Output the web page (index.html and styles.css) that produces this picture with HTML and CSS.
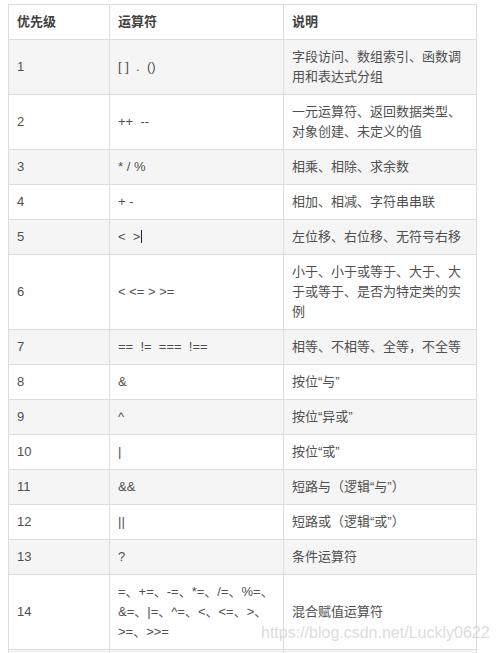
FILE: index.html
```html
<!DOCTYPE html>
<html lang="zh-CN">
<head>
<meta charset="utf-8">
<title>运算符优先级</title>
<link rel="stylesheet" href="styles.css">
</head>
<body>
<div class="page">
  <table class="ops">
    <colgroup>
      <col class="c1">
      <col class="c2">
      <col class="c3">
    </colgroup>
    <thead>
      <tr><th>优先级</th><th>运算符</th><th>说明</th></tr>
    </thead>
    <tbody>
      <tr><td>1</td><td>[ ]&nbsp;&nbsp;.&nbsp;&nbsp;()</td><td>字段访问、数组索引、函数调用和表达式分组</td></tr>
      <tr><td>2</td><td>++&nbsp; --</td><td>一元运算符、返回数据类型、对象创建、未定义的值</td></tr>
      <tr><td>3</td><td>* / %</td><td>相乘、相除、求余数</td></tr>
      <tr><td>4</td><td>+ -</td><td>相加、相减、字符串串联</td></tr>
      <tr><td>5</td><td>&lt;&nbsp; &gt;<span class="caret"></span></td><td>左位移、右位移、无符号右移</td></tr>
      <tr><td>6</td><td>&lt; &lt;= &gt; &gt;=</td><td>小于、小于或等于、大于、大于或等于、是否为特定类的实例</td></tr>
      <tr><td>7</td><td>==&nbsp; !=&nbsp; ===&nbsp; !==</td><td>相等、不相等、全等，不全等</td></tr>
      <tr><td>8</td><td>&amp;</td><td>按位“与”</td></tr>
      <tr><td>9</td><td>^</td><td>按位“异或”</td></tr>
      <tr><td>10</td><td>|</td><td>按位“或”</td></tr>
      <tr><td>11</td><td>&amp;&amp;</td><td>短路与（逻辑“与”）</td></tr>
      <tr><td>12</td><td>||</td><td>短路或（逻辑“或”）</td></tr>
      <tr><td>13</td><td>?</td><td>条件运算符</td></tr>
      <tr><td>14</td><td>=、+=、-=、*=、/=、%=、<br>&amp;=、|=、^=、&lt;、&lt;=、&gt;、<br>&gt;=、&gt;&gt;=</td><td>混合赋值运算符</td></tr>
      <tr class="tail"><td></td><td></td><td></td></tr>
    </tbody>
  </table>
  <div class="watermark">https://blog.csdn.net/Luckly0622</div>
</div>
</body>
</html>
```

FILE: styles.css
```css
html, body {
  margin: 0;
  padding: 0;
  background: #ffffff;
  overflow: hidden;
}

.page {
  position: relative;
  padding: 4px 0 0 8px;
  height: 649px;
  overflow: hidden;
}

.ops {
  border-collapse: collapse;
  table-layout: fixed;
  width: 468px;
  font-family: "Liberation Sans", "Noto Sans CJK SC", sans-serif;
  font-size: 13px;
  line-height: 20px;
  color: #4f4f4f;
}

.c1 { width: 101px; }
.c2 { width: 174px; }
.c3 { width: 193px; }

.ops th,
.ops td {
  border: 1px solid #dddddd;
  padding: 7px 8px;
  text-align: left;
  vertical-align: middle;
  word-break: normal;
}

.ops th {
  font-weight: bold;
  color: #3f3f3f;
  background: #ffffff;
}

.ops tbody tr:nth-child(odd) {
  background: #f5f5f5;
}

.ops tbody tr:nth-child(even) {
  background: #ffffff;
}

.caret {
  display: inline-block;
  width: 1px;
  height: 13px;
  margin-left: 1px;
  background: #222222;
  vertical-align: -2px;
}

.tail td {
  height: 40px;
}

.watermark {
  position: absolute;
  left: 261px;
  top: 625px;
  font-family: "Liberation Sans", sans-serif;
  font-size: 16px;
  line-height: 16px;
  color: rgba(190, 190, 190, 0.55);
  white-space: nowrap;
}
```
